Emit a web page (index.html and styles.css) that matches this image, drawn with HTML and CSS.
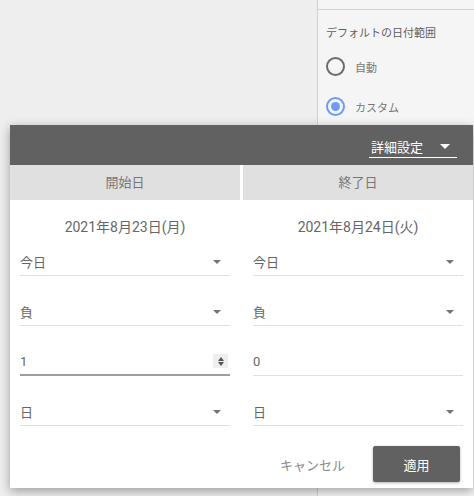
FILE: index.html
```html
<!DOCTYPE html>
<html>
<head>
    <link rel="stylesheet" href="styles.css">
</head>
<body>
    <div class="page">
        <div class="canvas-area"></div>
        <div class="side-panel">
            <div class="panel-top"></div>
            <div class="panel-section">
                <div class="section-title">デフォルトの日付範囲</div>
                <label class="radio-row">
                    <span class="radio"></span>
                    <span class="radio-label">自動</span>
                </label>
                <label class="radio-row">
                    <span class="radio checked"></span>
                    <span class="radio-label">カスタム</span>
                </label>
            </div>
        </div>
    </div>

    <div class="dialog">
        <div class="dialog-header">
            <div class="mode-select">
                <span>詳細設定</span>
                <span class="caret light"></span>
            </div>
        </div>
        <div class="tabs">
            <div class="tab">開始日</div>
            <div class="tab">終了日</div>
        </div>
        <div class="columns">
            <div class="column">
                <div class="date-label">2021年8月23日(月)</div>
                <div class="field first"><span>今日</span><span class="caret"></span></div>
                <div class="field"><span>負</span><span class="caret"></span></div>
                <div class="field focused"><span>1</span><span class="spinner"><i class="up"></i><i class="down"></i></span></div>
                <div class="field"><span>日</span><span class="caret"></span></div>
            </div>
            <div class="column">
                <div class="date-label">2021年8月24日(火)</div>
                <div class="field first"><span>今日</span><span class="caret"></span></div>
                <div class="field"><span>負</span><span class="caret"></span></div>
                <div class="field"><span>0</span></div>
                <div class="field"><span>日</span><span class="caret"></span></div>
            </div>
        </div>
        <div class="dialog-footer">
            <button class="btn-text">キャンセル</button>
            <button class="btn-apply">適用</button>
        </div>
    </div>
</body>
</html>
```

FILE: styles.css
```css
body {
    margin: 0;
    font-family: Roboto, "Noto Sans CJK JP", sans-serif;
    background: #eeeeee;
    overflow: hidden;
}
.page {
    display: flex;
    height: 496px;
}
.canvas-area {
    width: 317px;
    background: #eeeeee;
}
.side-panel {
    flex: 1;
    background: #f5f5f5;
    border-left: 1px solid #d2d2d2;
}
.panel-top {
    height: 9px;
    border-bottom: 1px solid #d2d2d2;
}
.panel-section {
    padding: 16px 8px 0 8px;
}
.section-title {
    font-size: 11px;
    color: #5f5f5f;
    line-height: 16px;
}
.radio-row {
    display: flex;
    align-items: center;
    gap: 10px;
    margin-top: 15px;
}
.radio-row + .radio-row {
    margin-top: 21px;
}
.radio {
    width: 15px;
    height: 15px;
    border: 2px solid #6b6b6b;
    border-radius: 50%;
    position: relative;
}
.radio.checked {
    border-color: #6f9bf7;
}
.radio.checked::after {
    content: "";
    position: absolute;
    left: 3px;
    top: 3px;
    width: 9px;
    height: 9px;
    border-radius: 50%;
    background: #6f9bf7;
}
.radio-label {
    font-size: 11px;
    color: #777;
}

.dialog {
    position: absolute;
    left: 10px;
    top: 125px;
    width: 463px;
    height: 363px;
    background: white;
    box-shadow: 0 3px 10px rgba(0, 0, 0, 0.35);
}
.dialog-header {
    height: 40px;
    background: #616161;
    display: flex;
    justify-content: flex-end;
    padding-right: 16px;
}
.mode-select {
    margin-top: 10px;
    width: 88px;
    height: 23px;
    border-bottom: 1px solid white;
    display: flex;
    justify-content: space-between;
    align-items: center;
    padding: 0 7px 0 2px;
    box-sizing: border-box;
    color: white;
    font-size: 13px;
}
.tabs {
    display: flex;
    gap: 3px;
}
.tab {
    flex: 1;
    height: 35px;
    line-height: 35px;
    background: #e0e0e0;
    text-align: center;
    font-size: 13px;
    color: #777;
}
.columns {
    display: flex;
    gap: 3px;
}
.column {
    flex: 1;
    padding: 0 10px;
}
.date-label {
    margin-top: 16px;
    line-height: 22px;
    text-align: center;
    font-size: 14px;
    color: #666;
}
.field {
    height: 27px;
    margin-top: 22px;
    border-bottom: 1px solid #e0e0e0;
    display: flex;
    justify-content: space-between;
    align-items: center;
    padding-right: 9px;
    font-size: 13px;
    color: #666;
}
.field.first {
    margin-top: 10px;
}
.field.focused {
    height: 26px;
    border-bottom: 2px solid #9e9e9e;
    padding-right: 2px;
}
.caret {
    width: 0;
    height: 0;
    border-left: 4px solid transparent;
    border-right: 4px solid transparent;
    border-top: 4px solid #757575;
}
.caret.light {
    border-left-width: 5px;
    border-right-width: 5px;
    border-top: 5px solid white;
}
.spinner {
    width: 15px;
    height: 14px;
    background: #eeeeee;
    display: flex;
    flex-direction: column;
    align-items: center;
    justify-content: center;
    gap: 1px;
}
.spinner i {
    width: 0;
    height: 0;
    border-left: 3.5px solid transparent;
    border-right: 3.5px solid transparent;
}
.spinner .up {
    border-bottom: 4px solid #555;
}
.spinner .down {
    border-top: 4px solid #555;
}
.dialog-footer {
    display: flex;
    justify-content: flex-end;
    gap: 24px;
    margin-top: 20px;
    padding-right: 13px;
}
.dialog-footer button {
    font-family: Roboto, "Noto Sans CJK JP", sans-serif;
    font-size: 13px;
    border: none;
    cursor: pointer;
}
.btn-text {
    background: none;
    color: #8a8a8a;
    padding: 0 4px;
}
.btn-apply {
    width: 87px;
    height: 36px;
    background: #616161;
    color: white;
    border-radius: 2px;
    box-shadow: 0 1px 3px rgba(0, 0, 0, 0.3);
}
```
